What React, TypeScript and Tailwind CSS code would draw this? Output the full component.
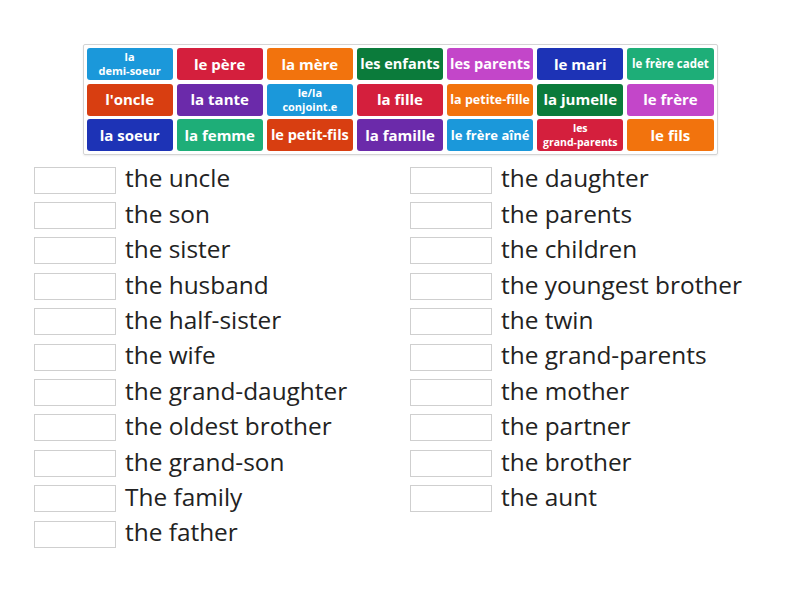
const C = {
  blue: "bg-[#1b98da]",
  red: "bg-[#d41f3d]",
  orange: "bg-[#f2730d]",
  green: "bg-[#0b7b3b]",
  pink: "bg-[#c346c9]",
  navy: "bg-[#1d33b6]",
  teal: "bg-[#1eae78]",
  rust: "bg-[#d83e11]",
  purple: "bg-[#6b2aaa]",
};

type Tile = { label: string; top?: string; color: string; size: string };

const tiles: Tile[] = [
  { top: "la", label: "demi-soeur", color: C.blue, size: "text-[11px]" },
  { label: "le père", color: C.red, size: "text-[15px]" },
  { label: "la mère", color: C.orange, size: "text-[15px]" },
  { label: "les enfants", color: C.green, size: "text-[14.5px]" },
  { label: "les parents", color: C.pink, size: "text-[14.5px]" },
  { label: "le mari", color: C.navy, size: "text-[15px]" },
  { label: "le frère cadet", color: C.teal, size: "text-[11.5px]" },
  { label: "l'oncle", color: C.rust, size: "text-[15px]" },
  { label: "la tante", color: C.purple, size: "text-[15px]" },
  { top: "le/la", label: "conjoint.e", color: C.blue, size: "text-[11px]" },
  { label: "la fille", color: C.red, size: "text-[15px]" },
  { label: "la petite-fille", color: C.orange, size: "text-[12.5px]" },
  { label: "la jumelle", color: C.green, size: "text-[15px]" },
  { label: "le frère", color: C.pink, size: "text-[15px]" },
  { label: "la soeur", color: C.navy, size: "text-[15px]" },
  { label: "la femme", color: C.teal, size: "text-[15px]" },
  { label: "le petit-fils", color: C.rust, size: "text-[14.5px]" },
  { label: "la famille", color: C.purple, size: "text-[15px]" },
  { label: "le frère aîné", color: C.blue, size: "text-[13px]" },
  { top: "les", label: "grand-parents", color: C.red, size: "text-[10.5px]" },
  { label: "le fils", color: C.orange, size: "text-[15px]" },
];

const left = [
  "the uncle",
  "the son",
  "the sister",
  "the husband",
  "the half-sister",
  "the wife",
  "the grand-daughter",
  "the oldest brother",
  "the grand-son",
  "The family",
  "the father",
];

const right = [
  "the daughter",
  "the parents",
  "the children",
  "the youngest brother",
  "the twin",
  "the grand-parents",
  "the mother",
  "the partner",
  "the brother",
  "the aunt",
];

function Row({ text }: { text: string }) {
  return (
    <div className="flex h-[35.4px] items-center">
      <div className="mt-[3px] h-[27px] w-[82px] shrink-0 border border-[#cfcfcf] bg-white" />
      <span className="ml-[9px] text-[24.4px] leading-none text-[#222]">{text}</span>
    </div>
  );
}

export default function App() {
  return (
    <div
      className="h-[600px] w-[800px] bg-white pt-[44px]"
      style={{ fontFamily: '"Open Sans", sans-serif' }}
    >
      <div className="mx-auto grid w-[635px] grid-cols-7 gap-x-[4px] gap-y-[3.5px] rounded-[2px] border border-[#d4d4d4] p-[3px] shadow-[0_1px_2px_rgba(0,0,0,0.08)]">
        {tiles.map((t) => (
          <div
            key={t.label}
            className={`flex h-[32px] flex-col items-center justify-center rounded-[3px] ${t.color} text-center font-bold text-white ${t.size} whitespace-nowrap ${t.top ? "leading-[14px]" : "leading-tight"}`}
          >
            {t.top && <span>{t.top}</span>}
            <span>{t.label}</span>
          </div>
        ))}
      </div>

      <div className="ml-[34px] mt-[6px] grid grid-cols-[376px_1fr]">
        <div className="flex flex-col">
          {left.map((s) => (
            <Row key={s} text={s} />
          ))}
        </div>
        <div className="flex flex-col">
          {right.map((s) => (
            <Row key={s} text={s} />
          ))}
        </div>
      </div>
    </div>
  );
}
